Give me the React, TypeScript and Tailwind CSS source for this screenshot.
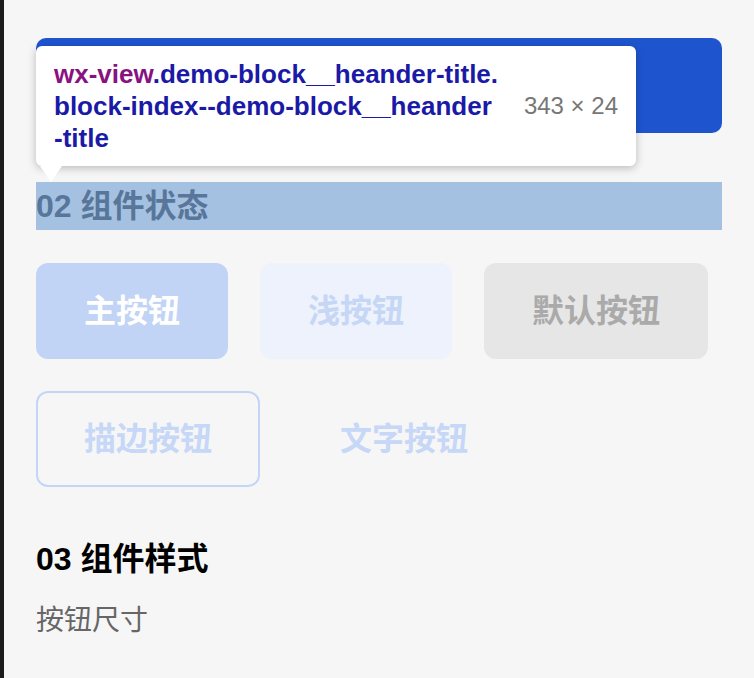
import React from 'react';

const cjk = { fontFamily: '"Liberation Sans", "Noto Sans CJK SC", sans-serif' };

const DemoButton: React.FC<{ label: string; className: string }> = ({ label, className }) => (
  <div className={`h-[96px] flex items-center justify-center rounded-[12px] text-[32px] font-bold ${className}`}>
    {label}
  </div>
);

export default function App() {
  return (
    <div className="flex min-h-[678px] bg-[#f6f6f6]" style={cjk}>
      {/* frame edge */}
      <div className="w-[4px] bg-[#1c1c1c] shrink-0" />

      <div className="relative flex-1 px-[32px] pt-[38px]">
        {/* Header block */}
        <div className="h-[95px] rounded-[10px] bg-[#1e55cf]" />

        {/* Inspector tooltip */}
        <div className="absolute left-[32px] top-[46px] w-[600px] h-[120px] bg-white rounded-[6px] shadow-[0_2px_8px_rgba(0,0,0,0.25)] flex items-center justify-between px-[18px]">
          <div className="text-[26px] leading-[32px] font-bold text-[#1a1aa6]" style={{ fontFamily: '"Liberation Sans", sans-serif' }}>
            <div>
              <span className="text-[#881280]">wx-view</span>.demo-block__heander-title.
            </div>
            <div>block-index--demo-block__heander</div>
            <div>-title</div>
          </div>
          <div className="text-[24px] text-[#777777]" style={{ fontFamily: '"Liberation Sans", sans-serif' }}>
            343 × 24
          </div>
          {/* arrow */}
          <div className="absolute left-[4px] top-[120px] w-0 h-0 border-l-[11px] border-r-[11px] border-t-[16px] border-l-transparent border-r-transparent border-t-white" />
        </div>

        {/* Section 02 */}
        <div className="mt-[49px] h-[48px] bg-[#a5c1e2] flex items-center text-[32px] font-bold text-[#587699]">
          02 组件状态
        </div>

        <div className="mt-[33px] flex gap-[32px]">
          <DemoButton label="主按钮" className="w-[192px] bg-[#c1d4f6] text-white" />
          <DemoButton label="浅按钮" className="w-[192px] bg-[#edf2fc] text-[#c6d7f6]" />
          <DemoButton label="默认按钮" className="w-[224px] bg-[#e6e6e6] text-[#aaaaaa]" />
        </div>
        <div className="mt-[32px] flex gap-[32px]">
          <DemoButton label="描边按钮" className="w-[224px] border-2 border-[#c3d6f7] text-[#c6d7f7]" />
          <DemoButton label="文字按钮" className="w-[224px] text-[#c6d7f7]" />
        </div>

        {/* Section 03 */}
        <div className="mt-[48px] h-[48px] flex items-center text-[32px] font-bold text-black">
          03 组件样式
        </div>
        <div className="mt-[18px] h-[40px] flex items-center text-[28px] text-[#666666]">
          按钮尺寸
        </div>
      </div>
    </div>
  );
}
